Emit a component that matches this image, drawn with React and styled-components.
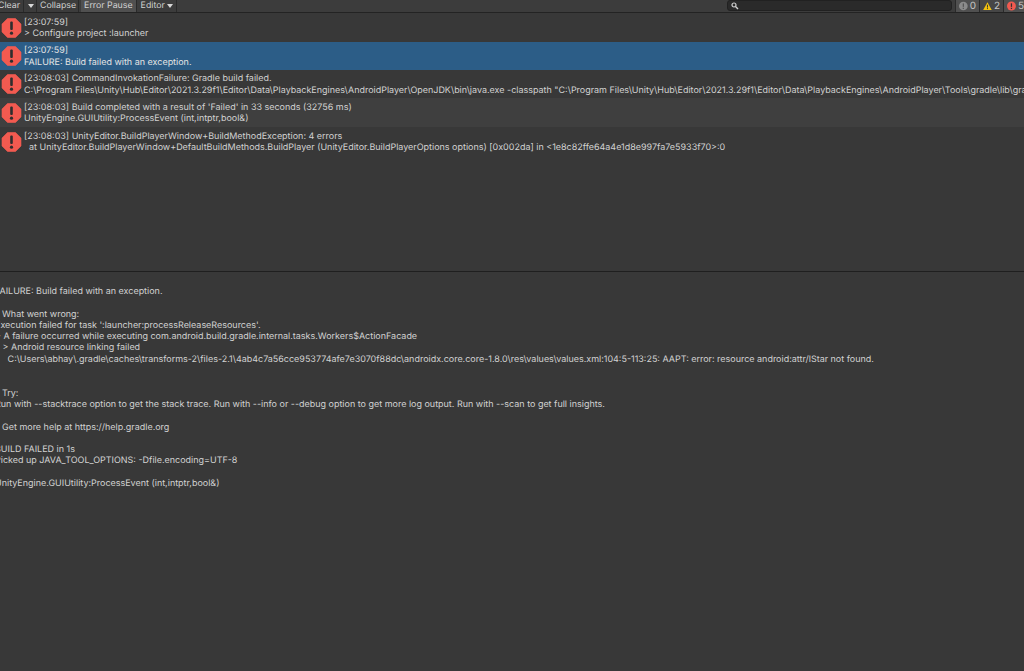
import React from 'react';
import styled, { createGlobalStyle } from 'styled-components';

const Global = createGlobalStyle`
  html, body { margin: 0; padding: 0; background: #383838; }
  body { font-family: Inter, "Liberation Sans", sans-serif; text-rendering: geometricPrecision; }
  #root { width: 1024px; height: 671px; overflow: hidden; }
`;
const Page = styled.div`
  width: 1024px; height: 671px; display: flex; flex-direction: column;
  background: #383838; overflow: hidden; color: #d2d2d2; font-size: 8.97px;
`;
const Toolbar = styled.div`
  height: 13px; flex: none; display: flex; align-items: stretch; background: #3c3c3c;
  border-bottom: 1px solid #232323; box-sizing: border-box; margin-left: -5px; margin-right: -3px;
  font-size: 8.8px;
`;
const ToolButton = styled.div`
  display: flex; align-items: center; gap: 2px; padding: 0 ${p => p.$pad || 3}px; margin-left: ${p => p.$gap || 0}px;
  background: ${p => (p.$on ? '#505050' : 'transparent')};
  border-right: 1px solid #2a2a2a; white-space: nowrap; line-height: 12px;
`;
const Caret = styled.span`
  width: 0; height: 0; border-left: 3px solid transparent; border-right: 3px solid transparent;
  border-top: 4px solid #d8d8d8;
`;
const Spacer = styled.div`flex: 1;`;
const Search = styled.div`
  width: 225px; height: 11px; margin-right: 3px; background: #2a2a2a; border: 1px solid #212121;
  border-radius: 3px; box-sizing: border-box; display: flex; align-items: center; padding-left: 3px;
`;
const Counter = styled.div`
  display: flex; align-items: center; gap: 2px; padding: 0 3px; width: 24px; box-sizing: border-box;
  background: ${p => (p.$on ? '#505050' : '#464646')}; border-left: 1px solid #2a2a2a;
  color: #c4c4c4; font-size: 10px;
`;
const List = styled.div`height: 258px; flex: none; display: flex; flex-direction: column; border-bottom: 1px solid #1f1f1f; box-sizing: content-box;`;
const Row = styled.div`
  height: ${p => p.$h || 29}px; flex: none; display: flex; align-items: center; gap: 2px;
  background: ${p => (p.$sel ? '#2c5d87' : p.$alt ? '#3f3f3f' : '#383838')};
  color: ${p => (p.$sel ? '#e4e4e4' : '#d2d2d2')};
  overflow: hidden;
`;
const IconWrap = styled.span`flex: none; width: 22px; height: 22px; display: block;`;
const Lines = styled.div`white-space: pre; line-height: 11.6px; margin-top: 1.5px;`;
const Detail = styled.div`
  flex: 1; white-space: pre; line-height: 11.3px; padding-top: 14px; margin-left: -5px;
`;

const ErrorGlyph = () => (
  <IconWrap>
    <svg width="22" height="22" viewBox="0 0 22 22">
      <path d="M7.5 1.5h8l5.5 5.5v8l-5.5 5.5h-8L2 15V7z" fill="#f25a50" stroke="#f25a50" strokeLinejoin="round" strokeWidth="0.6" />
      <rect x="10.2" y="4.5" width="2.6" height="8.6" rx="1" fill="#2e2e2e" />
      <circle cx="11.5" cy="16.2" r="1.6" fill="#2e2e2e" />
    </svg>
  </IconWrap>
);

const rows = [
  { t: '[23:07:59]\n> Configure project :launcher' , h: 29 },
  { t: '[23:07:59]\nFAILURE: Build failed with an exception.', sel: true, h: 28 },
  { t: '[23:08:03] CommandInvokationFailure: Gradle build failed.\nC:\\Program Files\\Unity\\Hub\\Editor\\2021.3.29f1\\Editor\\Data\\PlaybackEngines\\AndroidPlayer\\OpenJDK\\bin\\java.exe -classpath "C:\\Program Files\\Unity\\Hub\\Editor\\2021.3.29f1\\Editor\\Data\\PlaybackEngines\\AndroidPlayer\\Tools\\gradle\\lib\\gradle-launcher', h: 28 },
  { t: "[23:08:03] Build completed with a result of 'Failed' in 33 seconds (32756 ms)\nUnityEngine.GUIUtility:ProcessEvent (int,intptr,bool&)", alt: true, h: 29 },
  { t: '[23:08:03] UnityEditor.BuildPlayerWindow+BuildMethodException: 4 errors\n  at UnityEditor.BuildPlayerWindow+DefaultBuildMethods.BuildPlayer (UnityEditor.BuildPlayerOptions options) [0x002da] in <1e8c82ffe64a4e1d8e997fa7e5933f70>:0', h: 29 },
];

const detail = `FAILURE: Build failed with an exception.

* What went wrong:
Execution failed for task ':launcher:processReleaseResources'.
> A failure occurred while executing com.android.build.gradle.internal.tasks.Workers$ActionFacade
   > Android resource linking failed
     C:\\Users\\abhay\\.gradle\\caches\\transforms-2\\files-2.1\\4ab4c7a56cce953774afe7e3070f88dc\\androidx.core.core-1.8.0\\res\\values\\values.xml:104:5-113:25: AAPT: error: resource android:attr/lStar not found.


* Try:
Run with --stacktrace option to get the stack trace. Run with --info or --debug option to get more log output. Run with --scan to get full insights.

* Get more help at https://help.gradle.org

BUILD FAILED in 1s
Picked up JAVA_TOOL_OPTIONS: -Dfile.encoding=UTF-8

UnityEngine.GUIUtility:ProcessEvent (int,intptr,bool&)`;

export default function App() {
  return (
    <Page>
      <Global />
      <Toolbar>
        <ToolButton>Clear</ToolButton>
        <ToolButton $pad={2} $gap={2}><Caret /></ToolButton>
        <ToolButton $pad={2} $gap={1}>Collapse</ToolButton>
        <ToolButton $on $pad={3} $gap={2}>Error Pause</ToolButton>
        <ToolButton $gap={1}>Editor <Caret /></ToolButton>
        <Spacer />
        <Search>
          <svg width="8" height="8" viewBox="0 0 8 8"><circle cx="3" cy="3" r="2" fill="none" stroke="#d0d0d0" strokeWidth="1.2"/><path d="M4.5 4.5L7 7" stroke="#d0d0d0" strokeWidth="1.4"/></svg>
        </Search>
        <Counter $on>
          <svg width="10" height="10" viewBox="0 0 10 10"><circle cx="5" cy="5" r="5" fill="#8b8b8b"/><rect x="4.3" y="2" width="1.4" height="4" fill="#555"/><rect x="4.3" y="7" width="1.4" height="1.4" fill="#555"/></svg>
          0
        </Counter>
        <Counter>
          <svg width="11" height="10" viewBox="0 0 11 10"><path d="M5.5 0.5L10.8 9.8H0.2z" fill="#f2c20f"/><rect x="4.9" y="3.4" width="1.2" height="3.6" fill="#333"/><rect x="4.9" y="7.6" width="1.2" height="1.2" fill="#333"/></svg>
          2
        </Counter>
        <Counter $on>
          <svg width="10" height="10" viewBox="0 0 10 10"><circle cx="5" cy="5" r="5" fill="#f25a50"/><rect x="4.3" y="2" width="1.4" height="4" fill="#333"/><rect x="4.3" y="7" width="1.4" height="1.4" fill="#333"/></svg>
          5
        </Counter>
      </Toolbar>
      <List>
        {rows.map((r, i) => (
          <Row key={i} $sel={r.sel} $alt={r.alt} $h={r.h}>
            <ErrorGlyph />
            <Lines>{r.t}</Lines>
          </Row>
        ))}
      </List>
      <Detail>{detail}</Detail>
    </Page>
  );
}
